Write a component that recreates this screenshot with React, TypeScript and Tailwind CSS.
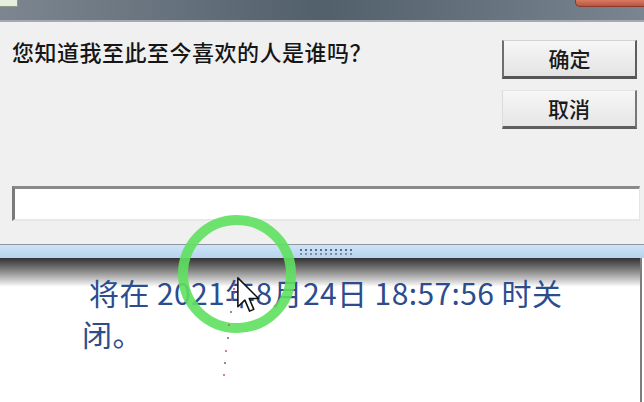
import React from "react";

const cjk = { fontFamily: '"Noto Sans CJK SC", "Noto Sans", sans-serif' };

function Overlay() {
  const dots = [
    [232, 300],
    [231, 312],
    [229, 325],
    [228, 338],
    [226, 351],
    [225, 363],
    [224, 375],
  ];
  return (
    <svg
      className="absolute left-0 top-0 pointer-events-none"
      width={644}
      height={402}
      viewBox="0 0 644 402"
    >
      <ellipse cx={237} cy={274} rx={54} ry={54} fill="none" stroke="#5fe05f" strokeOpacity={0.9} strokeWidth={10} />
      <line x1={234} y1={284} x2={234} y2={294} stroke="#c0407a" strokeWidth={1.5} strokeDasharray="2 2" />
      {dots.map(([x, y], i) => (
        <circle key={i} cx={x} cy={y} r={1} fill={i % 2 ? "#8a5a6a" : "#c05a7a"} />
      ))}
      <g transform="translate(237 277) scale(1.75)">
        <path
          d="M0.5 0.5 L0.5 17 L4.5 13.2 L7.2 19.5 L9.6 18.5 L7 12.3 L12.3 12.3 Z"
          fill="#fff"
          stroke="#111"
          strokeWidth={0.9}
          strokeLinejoin="round"
        />
      </g>
    </svg>
  );
}

export default function App() {
  return (
    <div className="relative w-[644px] h-[402px] overflow-hidden bg-white" style={cjk}>
      {/* title bar */}
      <div className="h-[20px] flex justify-between items-start bg-gradient-to-r from-[#7d8690] via-[#52606c] to-[#7a8591]">
        <div className="w-[18px] h-[7px] bg-[#e6eee0] border-r border-b border-[#8d9a88] rounded-br-[2px]" />
        <div className="w-[69px] h-[7px] bg-gradient-to-b from-[#d97a62] to-[#b8553f] border-l border-b border-[#8a3b2c] rounded-bl-[5px]" />
      </div>
      <div className="h-[2px] bg-[#a3aab1]" />

      {/* dialog body */}
      <div className="h-[222px] bg-[#f0f0f0] flex flex-col pl-[12px] pr-[4px]">
        <div className="flex justify-between pt-[16px]">
          <div className="text-[22px] leading-[26px] text-[#161616] font-medium tracking-[0.5px]">
            您知道我至此至今喜欢的人是谁吗？
          </div>
          <div className="flex flex-col gap-[11px] pt-[2px] pr-[3px]">
            <div className="w-[135px] h-[39px] flex items-center justify-center bg-gradient-to-b from-[#f6f6f6] to-[#e4e4e4] border-t border-t-[#d4d4d4] border-l-2 border-l-[#6e6e6e] border-r-2 border-r-[#5e5e5e] border-b-[3px] border-b-[#555] text-[21px] text-[#1a1a1a] font-medium">
              确定
            </div>
            <div className="w-[135px] h-[39px] flex items-center justify-center bg-gradient-to-b from-[#f6f6f6] to-[#e6e6e6] border-t border-t-[#e4e4e4] border-l border-l-[#dcdcdc] border-r-2 border-r-[#777] border-b-[3px] border-b-[#5e5e5e] text-[21px] text-[#1a1a1a] font-medium">
              取消
            </div>
          </div>
        </div>
        <div className="mt-[57px] h-[35px] w-[628px] bg-white border-t-[3px] border-t-[#8a8a8a] border-l-[3px] border-l-[#7a7a7a] border-r border-r-[#e4e4e4] border-b-2 border-b-[#e8e8e8]" />
      </div>

      {/* dialog bottom edge / splitter */}
      <div className="h-[1px] bg-[#8f98a2]" />
      <div className="h-[13px] bg-gradient-to-b from-[#cfe3f6] to-[#b6d3ef] flex items-center justify-center">
        <div className="flex gap-[3px] ml-[8px]">
          {[0, 1, 2, 3, 4, 5, 6, 7, 8, 9, 10].map((i) => (
            <div key={i} className="flex flex-col gap-[2px]">
              <div className="w-[2px] h-[2px] bg-[#5a6a80]" />
              <div className="w-[2px] h-[2px] bg-[#7d8ea4]" />
            </div>
          ))}
        </div>
      </div>

      {/* lower window */}
      <div className="h-[144px] w-[642px] border-r-2 border-r-[#7e7e7e] bg-gradient-to-b from-[#333333] via-[#ffffff] via-[20%] to-[#ffffff]">
        <div className="pt-[14px] pl-[82px] text-[30px] leading-[41px] tracking-[0.4px] text-[#2d4c8e]">
          <div className="pl-[7px]">将在 2021年8月24日 18:57:56 时关</div>
          <div>闭。</div>
        </div>
      </div>

      <Overlay />
    </div>
  );
}
